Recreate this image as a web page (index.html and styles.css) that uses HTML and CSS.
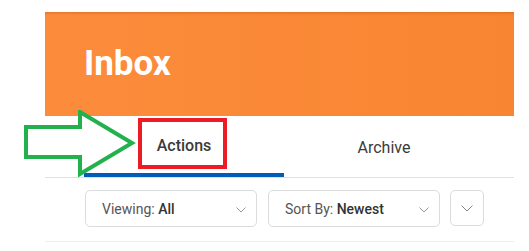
FILE: index.html
```html
<!DOCTYPE html>
<html>
<head>
<meta charset="utf-8">
<link rel="stylesheet" href="styles.css">
</head>
<body>
<div class="page">
  <div class="panel">
    <div class="header"><h1 class="title">Inbox</h1></div>
    <div class="tabs">
      <div class="tab tab-active">Actions</div>
      <div class="tab">Archive</div>
    </div>
    <div class="filters">
      <div class="select select-wide"><span class="label">Viewing:</span>&nbsp;<span class="value">All</span>
        <svg class="chev" width="10" height="6" viewBox="0 0 10 6"><path d="M0.5 0.5 L5 5 L9.5 0.5" fill="none" stroke="#999" stroke-width="1"/></svg>
      </div>
      <div class="select select-wide"><span class="label">Sort By:</span>&nbsp;<span class="value">Newest</span>
        <svg class="chev" width="10" height="6" viewBox="0 0 10 6"><path d="M0.5 0.5 L5 5 L9.5 0.5" fill="none" stroke="#999" stroke-width="1"/></svg>
      </div>
      <div class="select select-icon">
        <svg width="12" height="7" viewBox="0 0 12 7"><path d="M0.5 0.5 L6 6 L11.5 0.5" fill="none" stroke="#888" stroke-width="1"/></svg>
      </div>
    </div>
    <div class="rule-yellow"></div>
  </div>
  <svg class="arrow" width="140" height="70" viewBox="0 0 140 70">
    <polygon points="2,17 56,17 56,2 108,33 56,64 56,47 2,47" fill="none" stroke="#22b14c" stroke-width="4"/>
  </svg>
  <div class="redbox"></div>
</div>
</body>
</html>
```
FILE: styles.css
```css
* { box-sizing: border-box; }
html, body { margin: 0; padding: 0; background: #fff; }
body { font-family: Roboto, "Noto Sans", sans-serif; }
.page { position: relative; width: 529px; height: 251px; overflow: hidden; padding: 12px 15px 0 45px; }
.panel { width: 469px; }
.header {
  height: 104px;
  padding: 32px 0 0 39px;
  background: linear-gradient(to right, #fc8c3c, #f88531);
  box-shadow: inset 0 3px 3px -2px rgba(180, 80, 10, 0.45);
}
.title { margin: 0; font-size: 35px; line-height: 40px; font-weight: 700; color: #fff; }
.tabs { display: flex; height: 62px; padding-left: 39px; border-bottom: 1px solid #dde1e6; }
.tab {
  width: 200px; display: flex; align-items: center; justify-content: center;
  padding-top: 2px; font-size: 16px; color: #3a3a3a;
}
.tab-active { font-weight: 500; border-bottom: 4px solid #005cb9; }
.filters { display: flex; gap: 10px; padding: 12px 0 0 40px; height: 63px; }
.select {
  height: 37px; border: 1px solid #dcdcdc; border-radius: 5px;
  display: flex; align-items: center; font-size: 14px; color: #555;
}
.select-wide { width: 172px; padding: 0 10px 0 16px; }
.select-wide + .select-wide { margin-left: 1px; }
.select .value { font-weight: 500; color: #333; }
.chev { margin-left: auto; margin-top: 3px; }
.select-icon { width: 34px; height: 36px; justify-content: center; }
.rule-yellow { height: 1px; background: #fbf1c0; }
.arrow { position: absolute; left: 24px; top: 110px; }
.redbox { position: absolute; left: 138px; top: 118px; width: 89px; height: 51px; border: 4px solid #ed1c24; }
```
